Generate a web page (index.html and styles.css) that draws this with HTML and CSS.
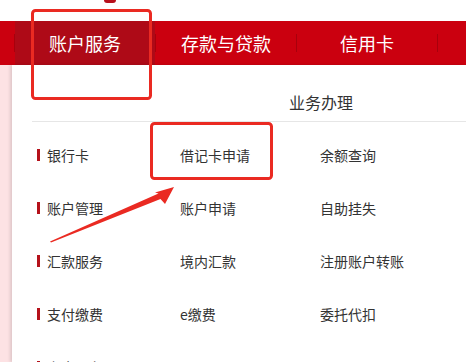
FILE: index.html
```html
<!DOCTYPE html>
<html lang="zh-CN">
<head>
    <meta charset="UTF-8">
    <meta name="viewport" content="width=device-width, initial-scale=1.0">
    <title>账户服务</title>
    <link rel="stylesheet" href="styles.css">
</head>
<body>
    <div class="top">
        <div class="logo-bit"></div>
    </div>

    <div class="nav">
        <span class="nav-sep"></span>
        <a class="nav-item active">账户服务</a>
        <span class="nav-sep"></span>
        <a class="nav-item">存款与贷款</a>
        <span class="nav-sep"></span>
        <a class="nav-item">信用卡</a>
        <span class="nav-sep"></span>
    </div>

    <div class="main">
        <div class="side"></div>
        <div class="panel">
            <div class="panel-title">业务办理</div>
            <div class="grid">
                <div class="cell cat"><span class="mark"></span>银行卡</div>
                <div class="cell">借记卡申请</div>
                <div class="cell">余额查询</div>

                <div class="cell cat"><span class="mark"></span>账户管理</div>
                <div class="cell">账户申请</div>
                <div class="cell">自助挂失</div>

                <div class="cell cat"><span class="mark"></span>汇款服务</div>
                <div class="cell">境内汇款</div>
                <div class="cell">注册账户转账</div>

                <div class="cell cat"><span class="mark"></span>支付缴费</div>
                <div class="cell">e缴费</div>
                <div class="cell">委托代扣</div>

                <div class="cell cat"><span class="mark"></span>安全服务</div>
                <div class="cell"></div>
                <div class="cell"></div>
            </div>
        </div>
    </div>

    <!-- screenshot markup: boxes + arrow -->
    <svg class="marks" width="466" height="362" viewBox="0 0 466 362">
        <rect x="32.5" y="10.5" width="118" height="88" rx="3" fill="none" stroke="#ea2a22" stroke-width="3"/>
        <rect x="151.5" y="123.5" width="120" height="55" rx="3" fill="none" stroke="#ea2a22" stroke-width="3"/>
        <polygon points="50,241.5 158.5,193.5 155,192.5 174,187 165,204 160.5,199 51,242.5" fill="#ea2a22"/>
    </svg>
</body>
</html>
```

FILE: styles.css
```css
body {
    margin: 0;
    font-family: "Microsoft YaHei", "Noto Sans CJK SC", sans-serif;
    background: #fff;
    width: 466px;
    height: 362px;
    overflow: hidden;
    position: relative;
}
.top {
    height: 21px;
}
.logo-bit {
    margin-left: 104px;
    width: 12px;
    height: 3px;
    background: #b8101c;
    border-radius: 0 0 6px 6px;
}
.nav {
    display: flex;
    align-items: center;
    height: 44px;
    padding-left: 14px;
    background: #cb000f;
}
.nav-sep {
    flex: none;
    width: 1px;
    height: 18px;
    background: #a8000c;
}
.nav-item {
    flex: none;
    width: 140px;
    height: 100%;
    display: flex;
    align-items: center;
    justify-content: center;
    color: #fff;
    font-size: 18px;
}
.nav-item.active {
    background: #ae0a17;
}
.main {
    display: flex;
    height: 297px;
}
.side {
    width: 12px;
    background: #fde2e4;
}
.panel {
    flex: 1;
    padding-left: 20px;
    background: #fff;
    box-shadow: -2px 0 3px rgba(0, 0, 0, 0.12);
}
.panel-title {
    box-sizing: border-box;
    height: 57px;
    padding: 27px 0 0 257px;
    font-size: 16px;
    line-height: 20px;
    color: #333;
    border-bottom: 1px solid #e6e6e6;
}
.grid {
    display: grid;
    grid-template-columns: 148px 140px 1fr;
    grid-auto-rows: 53px;
    padding-top: 6px;
}
.cell {
    display: flex;
    align-items: center;
    font-size: 14px;
    color: #333;
}
.cat {
    padding-left: 5px;
}
.mark {
    width: 3px;
    height: 12px;
    margin-right: 7px;
    background: #b5121b;
}
.marks {
    position: absolute;
    top: 0;
    left: 0;
    pointer-events: none;
}
```
